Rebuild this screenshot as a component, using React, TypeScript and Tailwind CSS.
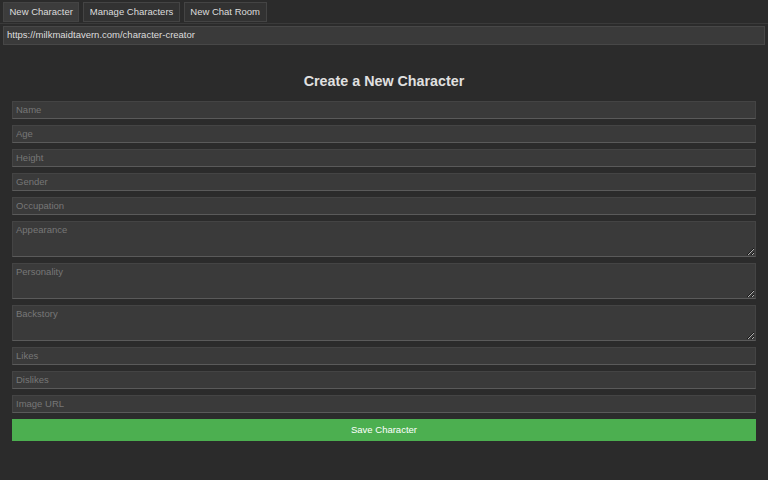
import React from 'react';

const inputCls =
  "block w-full h-[18px] px-[3px] pb-[2px] bg-[#3a3a3a] border border-[#444] border-b-[#5a5a5a] text-[9.5px] text-[#ddd] placeholder:text-[#777] outline-none";
const areaCls =
  "block w-full h-[36px] px-[3px] py-[1px] bg-[#3a3a3a] border border-[#444] border-b-[#5a5a5a] text-[9.5px] text-[#ddd] placeholder:text-[#777] outline-none resize-y";

const tabs = ["New Character", "Manage Characters", "New Chat Room"];

export default function App() {
  return (
    <div
      className="w-[768px] h-[480px] bg-[#2b2b2b] overflow-hidden"
      style={{ fontFamily: '"Liberation Sans", Arial, sans-serif' }}
    >
      {/* Tabs */}
      <div className="flex gap-1 px-[3px] pt-[2px] h-[24px] border-b border-[#3a3a3a]">
        {tabs.map((t, i) => (
          <button
            key={t}
            className={
              "h-[20px] px-[5.5px] text-[9.5px] text-[#ddd] border border-[#444] " +
              (i === 0 ? "bg-[#3c3c3c]" : "bg-[#323232]")
            }
          >
            {t}
          </button>
        ))}
      </div>

      {/* Address bar */}
      <div className="px-[3px] pt-[2px]">
        <div className="h-[19px] flex items-center px-[3px] bg-[#3a3a3a] border border-[#474747] text-[9.5px] text-[#ddd]">
          https://milkmaidtavern.com/character-creator
        </div>
      </div>

      {/* Form */}
      <div className="px-3 pt-[27px]">
        <h2 className="text-center text-[14.3px] font-bold text-[#e0e0e0] leading-[18px] mb-[11px]">
          Create a New Character
        </h2>
        <div className="flex flex-col gap-[6px]">
          <input className={inputCls} placeholder="Name" />
          <input className={inputCls} placeholder="Age" />
          <input className={inputCls} placeholder="Height" />
          <input className={inputCls} placeholder="Gender" />
          <input className={inputCls} placeholder="Occupation" />
          <textarea className={areaCls} placeholder="Appearance" />
          <textarea className={areaCls} placeholder="Personality" />
          <textarea className={areaCls} placeholder="Backstory" />
          <input className={inputCls} placeholder="Likes" />
          <input className={inputCls} placeholder="Dislikes" />
          <input className={inputCls} placeholder="Image URL" />
          <button className="h-[22px] w-full bg-[#4caf50] text-white text-[9.5px]">
            Save Character
          </button>
        </div>
      </div>
    </div>
  );
}
